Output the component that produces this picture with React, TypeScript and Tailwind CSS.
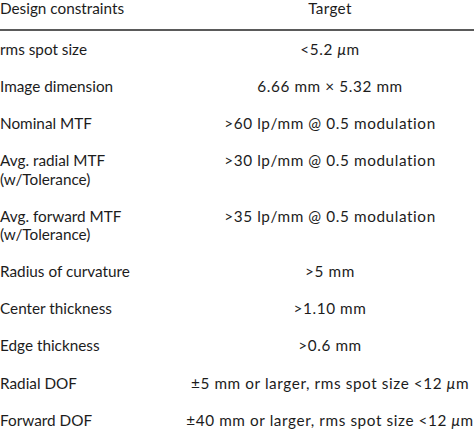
import React from "react";

const rows: { label: React.ReactNode; value: React.ReactNode }[] = [
  { label: "rms spot size", value: <>&lt;5.2 <i>μ</i>m</> },
  { label: "Image dimension", value: <>6.66 mm × 5.32 mm</> },
  { label: "Nominal MTF", value: <>&gt;60 lp/mm @ 0.5 modulation</> },
  { label: <>Avg. radial MTF<br />(w/Tolerance)</>, value: <>&gt;30 lp/mm @ 0.5 modulation</> },
  { label: <>Avg. forward MTF<br />(w/Tolerance)</>, value: <>&gt;35 lp/mm @ 0.5 modulation</> },
  { label: "Radius of curvature", value: <>&gt;5 mm</> },
  { label: "Center thickness", value: <>&gt;1.10 mm</> },
  { label: "Edge thickness", value: <>&gt;0.6 mm</> },
  { label: "Radial DOF", value: <>±5 mm or larger, rms spot size &lt;12 <i>μ</i>m</> },
  { label: "Forward DOF", value: <>±40 mm or larger, rms spot size &lt;12 <i>μ</i>m</> },
];

export default function App() {
  return (
    <div className="w-[474px] h-[435px] overflow-hidden bg-white text-[#1c1c1c] text-[15.3px] leading-[18.5px] font-['Lato','Noto_Sans',sans-serif]">
      <div className="grid grid-cols-[186px_1fr] pb-[11px] border-b-2 border-[#5a5a5a] -mt-[1px]">
        <div className="whitespace-nowrap">Design constraints</div>
        <div className="text-center whitespace-nowrap tracking-[0.3px]">Target</div>
      </div>
      {rows.map((r, i) => (
        <div key={i} className="grid grid-cols-[186px_1fr] py-[9.3px]">
          <div className="whitespace-nowrap">{r.label}</div>
          <div className="text-center whitespace-nowrap tracking-[0.6px]">{r.value}</div>
        </div>
      ))}
    </div>
  );
}
